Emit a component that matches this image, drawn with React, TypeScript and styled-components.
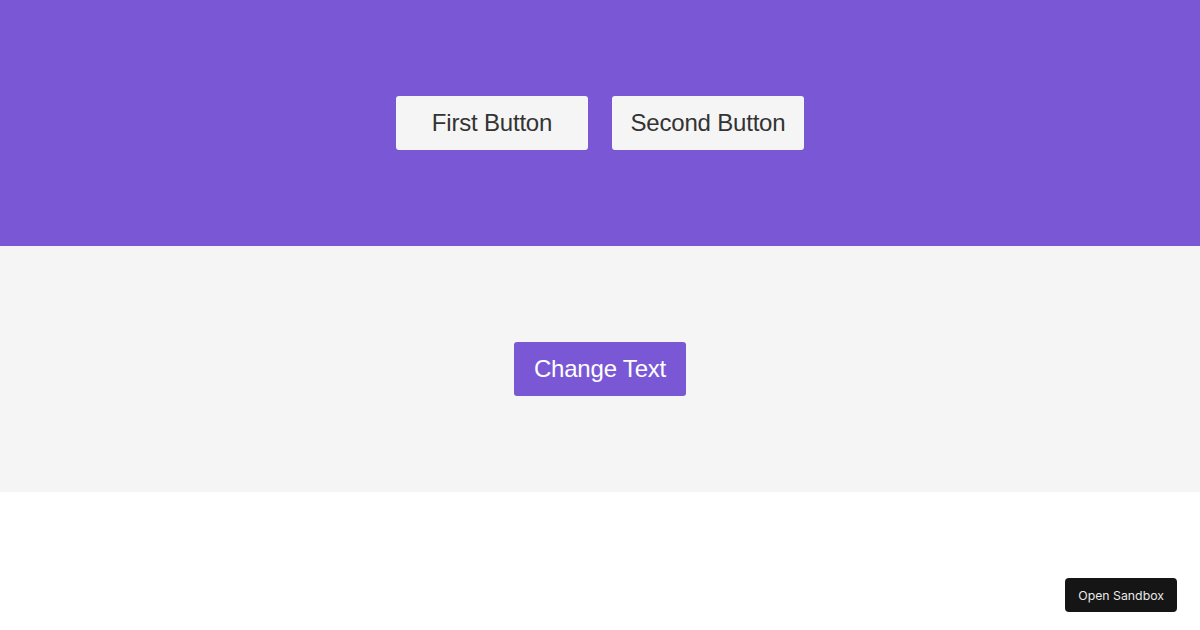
import React, { useState } from "react";
import styled, { createGlobalStyle } from "styled-components";

const Global = createGlobalStyle`
  html, body { margin: 0; padding: 0; background: #fff; }
  body { font-family: "Liberation Sans", Arial, sans-serif; }
  * { box-sizing: border-box; }
`;

const Section = styled.section<{ $bg: string }>`
  height: 246px;
  background: ${(p) => p.$bg};
  display: flex;
  align-items: center;
  justify-content: center;
  gap: 24px;
`;

const Button = styled.button<{ $variant: "light" | "purple"; $w?: number }>`
  height: 54px;
  ${(p) => (p.$w ? `width: ${p.$w}px;` : "padding: 0 20px;")}
  border: none;
  border-radius: 3px;
  font-family: "Liberation Sans", Arial, sans-serif;
  font-size: 24px;
  letter-spacing: -0.2px;
  cursor: pointer;
  background: ${(p) => (p.$variant === "light" ? "#f5f5f5" : "#7a58d5")};
  color: ${(p) => (p.$variant === "light" ? "#333333" : "#ffffff")};
`;

const SandboxLink = styled.a`
  position: fixed;
  right: 23px;
  bottom: 18px;
  height: 34px;
  padding: 0 13px;
  display: flex;
  align-items: center;
  background: #151515;
  color: #e8e8e8;
  border-radius: 4px;
  font-family: Inter, "Liberation Sans", sans-serif;
  font-size: 12.3px;
  text-decoration: none;
`;

export default function App() {
  const [changed, setChanged] = useState(false);
  return (
    <>
      <Global />
      <Section $bg="#7a58d5">
        <Button $variant="light" $w={192}>
          {changed ? "Changed" : "First Button"}
        </Button>
        <Button $variant="light" $w={192}>
          Second Button
        </Button>
      </Section>
      <Section $bg="#f5f5f5">
        <Button $variant="purple" onClick={() => setChanged((c) => !c)}>
          Change Text
        </Button>
      </Section>
      <SandboxLink href="#">Open Sandbox</SandboxLink>
    </>
  );
}
